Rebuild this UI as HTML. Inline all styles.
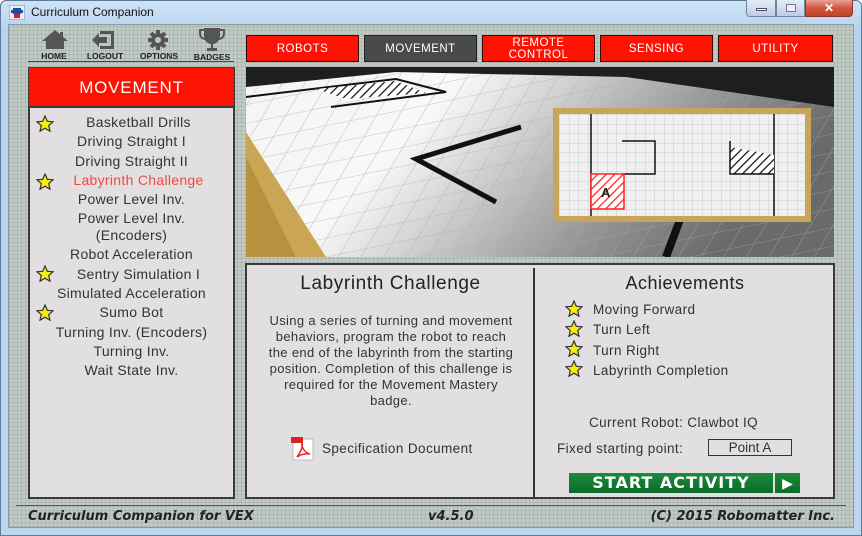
<!DOCTYPE html>
<html><head><meta charset="utf-8"><style>
*{margin:0;padding:0;box-sizing:border-box}
body{width:862px;height:536px;overflow:hidden;font-family:"Liberation Sans",sans-serif;background:#fff;position:relative}
.abs{position:absolute}
.win{left:0;top:0;width:862px;height:536px;background:linear-gradient(#cfe3f5,#b7d3ee 30px,#bcd6ef);border:1px solid #5d7b9a;border-radius:6px 6px 0 0}
.content{left:8px;top:24px;width:846px;height:504px;border:1px solid #8a9aa5;
background-color:#c3cbc7;
background-image:repeating-linear-gradient(0deg,#aeb8b3 0 1px,transparent 1px 4px),repeating-linear-gradient(90deg,#aeb8b3 0 1px,transparent 1px 4px);}
.tab{top:35px;height:27px;width:113px;background:#fe1203;border:1px solid #3a0a06;color:#fff;font-size:11.5px;letter-spacing:0.5px;text-align:center;display:flex;align-items:center;justify-content:center;line-height:12px}
.panel{background:#e1dfe1;border:2px solid #3a3a3a}
.list div{text-align:center;font-size:14px;color:#333;line-height:19.3px;letter-spacing:0.3px}
.star{position:absolute;left:36px;width:18px;height:17px}
.ico{top:28px;font-size:8.5px;font-weight:bold;color:#222;text-align:center}
.ft{top:509px;font-family:"DejaVu Sans",sans-serif;font-size:13px;font-weight:bold;font-style:italic;color:#222}
</style></head><body>
<div class="abs win"></div>
<svg class="abs" style="left:9px;top:5px" width="16" height="15"><rect x="0" y="0" width="16" height="15" fill="#e8eef6" stroke="#6b86a6"/><rect x="4" y="3" width="8" height="6" fill="#1b4fa0"/><rect x="2" y="5" width="12" height="3" fill="#1b4fa0"/><rect x="5" y="9" width="6" height="4" fill="#c23"/></svg>
<div class="abs" style="left:31px;top:5px;font-size:12px;color:#111">Curriculum Companion</div>
<div class="abs" style="left:746px;top:0;width:30px;height:17px;border:1px solid #6f86a1;border-top:none;border-radius:0 0 0 4px;background:linear-gradient(#e4edf7,#bccde2)"><div style="margin:8px auto 0;width:11px;height:3px;background:#fff;border:1px solid #556"></div></div>
<div class="abs" style="left:776px;top:0;width:29px;height:17px;border:1px solid #6f86a1;border-top:none;background:linear-gradient(#e4edf7,#bccde2)"><div style="margin:4px auto 0;width:10px;height:8px;border:1px solid #778;background:#eef"></div></div>
<div class="abs" style="left:805px;top:0;width:48px;height:17px;border:1px solid #8a3a30;border-top:none;border-radius:0 0 4px 0;background:linear-gradient(#e9a296,#d2553f 50%,#c7402a);color:#fff;font-weight:bold;font-size:12px;text-align:center;line-height:16px">✕</div>
<div class="abs content"></div>
<svg class="abs" style="left:40px;top:29px" width="30" height="20"><path d="M15 1 L2 12 H6 V20 H24 V12 H28Z" fill="#555"/><rect x="20" y="3" width="3" height="6" fill="#555"/></svg>
<div class="abs ico" style="left:36px;top:51px;width:36px">HOME</div>
<svg class="abs" style="left:90px;top:29px" width="28" height="22"><path d="M10 2 H24 V20 H10 V17 H21 V5 H10Z" fill="#555"/><path d="M2 11 L9 4 V8 H17 V14 H9 V18Z" fill="#555"/></svg>
<div class="abs ico" style="left:82px;top:51px;width:46px">LOGOUT</div>
<svg class="abs" style="left:147px;top:29px" width="22" height="22"><circle cx="11" cy="11" r="7" fill="#555"/><g stroke="#555" stroke-width="4"><line x1="11" y1="1" x2="11" y2="21"/><line x1="1" y1="11" x2="21" y2="11"/><line x1="4" y1="4" x2="18" y2="18"/><line x1="18" y1="4" x2="4" y2="18"/></g><circle cx="11" cy="11" r="3" fill="#c3cbc7"/></svg>
<div class="abs ico" style="left:133px;top:51px;width:52px">OPTIONS</div>
<svg class="abs" style="left:199px;top:27px" width="26" height="26"><path d="M5 1 H21 V9 C21 14 17 17 14 17 V21 H18 V24 H8 V21 H12 V17 C9 17 5 14 5 9Z" fill="#555"/><path d="M5 3 H1 V7 C1 10 4 12 6 12 M21 3 H25 V7 C25 10 22 12 20 12" stroke="#555" stroke-width="2" fill="none"/></svg>
<div class="abs ico" style="left:189px;top:52px;width:46px">BADGES</div>
<div class="abs" style="left:28px;top:61px;width:206px;height:1px;background:#444"></div>
<div class="abs tab" style="left:246px">ROBOTS</div>
<div class="abs tab" style="left:364px;background:#4a4a4a;border-color:#222">MOVEMENT</div>
<div class="abs tab" style="left:482px">REMOTE<br>CONTROL</div>
<div class="abs tab" style="left:600px">SENSING</div>
<div class="abs tab" style="left:718px;width:115px">UTILITY</div>
<div class="abs panel" style="left:28px;top:67px;width:207px;height:432px"></div>
<div class="abs" style="left:29px;top:68px;width:205px;height:40px;background:#fe1203;border-bottom:2px solid #3a3a3a;color:#fff;font-size:17px;letter-spacing:0.8px;text-align:center;line-height:40px">MOVEMENT</div>
<div class="abs list" style="left:30px;top:113px;width:203px">
<div style="padding-left:14px">Basketball Drills</div>
<div>Driving Straight I</div>
<div>Driving Straight II</div>
<div style="color:#f14a3c;padding-left:14px">Labyrinth Challenge</div>
<div>Power Level Inv.</div>
<div style="line-height:17px;padding:1px 0">Power Level Inv.<br>(Encoders)</div>
<div>Robot Acceleration</div>
<div style="padding-left:14px">Sentry Simulation I</div>
<div>Simulated Acceleration</div>
<div>Sumo Bot</div>
<div>Turning Inv. (Encoders)</div>
<div>Turning Inv.</div>
<div>Wait State Inv.</div>
</div>
<svg width="0" height="0" style="position:absolute"><defs><path id="st" d="M9 1 L11.3 6.3 L17 6.8 L12.7 10.6 L14 16.2 L9 13.2 L4 16.2 L5.3 10.6 L1 6.8 L6.7 6.3Z" fill="#f5ee10" stroke="#333" stroke-width="1.2"/></defs></svg>
<svg class="star" style="top:115px"><use href="#st"/></svg>
<svg class="star" style="top:173px"><use href="#st"/></svg>
<svg class="star" style="top:265px"><use href="#st"/></svg>
<svg class="star" style="top:304px"><use href="#st"/></svg>
<svg class="abs" style="left:246px;top:67px" width="588" height="190" viewBox="0 0 588 190">
<defs>
<linearGradient id="fl" x1="0" y1="0" x2="1" y2="0.3"><stop offset="0" stop-color="#f4f4f4"/><stop offset="0.35" stop-color="#f8f8f8"/><stop offset="0.75" stop-color="#9a9a9a"/><stop offset="1" stop-color="#6a6a6a"/></linearGradient>
<pattern id="gr" width="22" height="22" patternUnits="userSpaceOnUse" patternTransform="skewX(-40) rotate(-14)"><path d="M0 0 H22 M0 0 V22" stroke="#aaa" stroke-width="1.2" fill="none"/></pattern>
<pattern id="ht" width="6" height="6" patternUnits="userSpaceOnUse" patternTransform="rotate(45)"><rect width="6" height="6" fill="#fff"/><line x1="0" y1="0" x2="0" y2="6" stroke="#111" stroke-width="2.5"/></pattern>
<pattern id="hr" width="6" height="6" patternUnits="userSpaceOnUse" patternTransform="rotate(45)"><rect width="6" height="6" fill="#fff"/><line x1="0" y1="0" x2="0" y2="6" stroke="#f22" stroke-width="2.5"/></pattern>
<pattern id="sg" width="9.5" height="9.5" patternUnits="userSpaceOnUse"><rect width="9.5" height="9.5" fill="#f0f0f0"/><path d="M0 0 H9.5 M0 0 V9.5" stroke="#ccc" fill="none"/></pattern>
</defs>
<rect width="588" height="190" fill="#1e1e1e"/>
<polygon points="0,20 150,5 380,10 588,40 588,190 0,190" fill="url(#fl)"/>
<polygon points="0,20 150,5 380,10 588,40 588,190 0,190" fill="url(#gr)" opacity="0.7"/>
<polygon points="0,65 80,190 0,190" fill="#c9a554"/>
<polygon points="0,90 50,190 0,190" fill="#b8913f"/>
<path d="M0 30 L150 12 L200 25 L85 40" stroke="#111" stroke-width="2" fill="none"/>
<polygon points="70,22 150,14 180,26 100,32" fill="url(#ht)"/>
<path d="M275 60 L170 92 L250 135" stroke="#111" stroke-width="5" fill="none"/>
<path d="M435 150 L420 190" stroke="#111" stroke-width="8"/>
<rect x="307" y="41" width="258" height="114" fill="#c8a55a"/>
<rect x="313" y="47" width="246" height="102" fill="url(#sg)"/>
<line x1="345" y1="47" x2="345" y2="149" stroke="#111" stroke-width="1.5"/>
<line x1="528" y1="47" x2="528" y2="149" stroke="#111" stroke-width="1.5"/>
<path d="M376 74 H409 V107 H376" stroke="#111" stroke-width="1.5" fill="none"/>
<polygon points="484,80 528,88 528,107 484,107" fill="url(#ht)"/>
<path d="M484 74 V107 H528" stroke="#111" stroke-width="1.5" fill="none"/>
<rect x="345" y="107" width="33" height="35" fill="url(#hr)" stroke="#f22" stroke-width="1.5"/>
<text x="355" y="130" font-family="Liberation Sans" font-weight="bold" font-size="13" fill="#222">A</text>
</svg>
<div class="abs panel" style="left:245px;top:263px;width:590px;height:236px"></div>
<div class="abs" style="left:533px;top:268px;width:2px;height:229px;background:#333"></div>
<div class="abs" style="left:248px;top:273px;width:285px;text-align:center;font-size:19px;letter-spacing:0.6px;color:#222">Labyrinth Challenge</div>
<div class="abs" style="left:268px;top:313px;width:246px;text-align:center;font-size:13px;letter-spacing:0.35px;line-height:16px;color:#333">Using a series of turning and movement behaviors, program the robot to reach the end of the labyrinth from the starting position. Completion of this challenge is required for the Movement Mastery badge.</div>
<svg class="abs" style="left:291px;top:437px" width="24" height="24"><rect x="2" y="2" width="20" height="21" fill="#fff" stroke="#bbb"/><rect x="0" y="0" width="12" height="6" fill="#d22"/><path d="M6 20 C10 14 12 10 11 6 C10 10 14 16 19 17 C14 16 9 18 6 20Z" stroke="#e22" stroke-width="1.5" fill="none"/></svg>
<div class="abs" style="left:322px;top:441px;font-size:13.5px;letter-spacing:0.4px;color:#333">Specification Document</div>
<div class="abs" style="left:536px;top:273px;width:298px;text-align:center;font-size:18px;letter-spacing:0.5px;color:#222">Achievements</div>
<div class="abs" style="left:593px;top:300px;font-size:13.5px;letter-spacing:0.4px;color:#333;line-height:20.3px">Moving Forward<br>Turn Left<br>Turn Right<br>Labyrinth Completion</div>
<svg class="star" style="left:565px;top:300px"><use href="#st"/></svg>
<svg class="star" style="left:565px;top:320px"><use href="#st"/></svg>
<svg class="star" style="left:565px;top:340px"><use href="#st"/></svg>
<svg class="star" style="left:565px;top:360px"><use href="#st"/></svg>
<div class="abs" style="left:589px;top:415px;font-size:13.5px;letter-spacing:0.4px;color:#333">Current Robot: Clawbot IQ</div>
<div class="abs" style="left:557px;top:441px;font-size:13.5px;letter-spacing:0.4px;color:#333">Fixed starting point:</div>
<div class="abs" style="left:708px;top:439px;width:84px;height:17px;border:1px solid #333;font-size:13.5px;color:#333;text-align:center;line-height:15px">Point A</div>
<div class="abs" style="left:569px;top:473px;width:204px;height:20px;background:linear-gradient(#1e8a3e,#0b6a2a);color:#fff;font-family:'DejaVu Sans',sans-serif;font-weight:bold;font-size:16px;letter-spacing:1px;text-align:center;line-height:20px;white-space:nowrap">START ACTIVITY</div>
<div class="abs" style="left:775px;top:473px;width:25px;height:20px;background:linear-gradient(#1e8a3e,#0b6a2a);color:#fff;font-size:14px;text-align:center;line-height:20px">▶</div>
<div class="abs" style="left:16px;top:505px;width:830px;height:1px;background:#555"></div>
<div class="abs ft" style="left:28px">Curriculum Companion for VEX</div>
<div class="abs ft" style="left:428px">v4.5.0</div>
<div class="abs ft" style="right:27px">(C) 2015 Robomatter Inc.</div>
</body></html>
